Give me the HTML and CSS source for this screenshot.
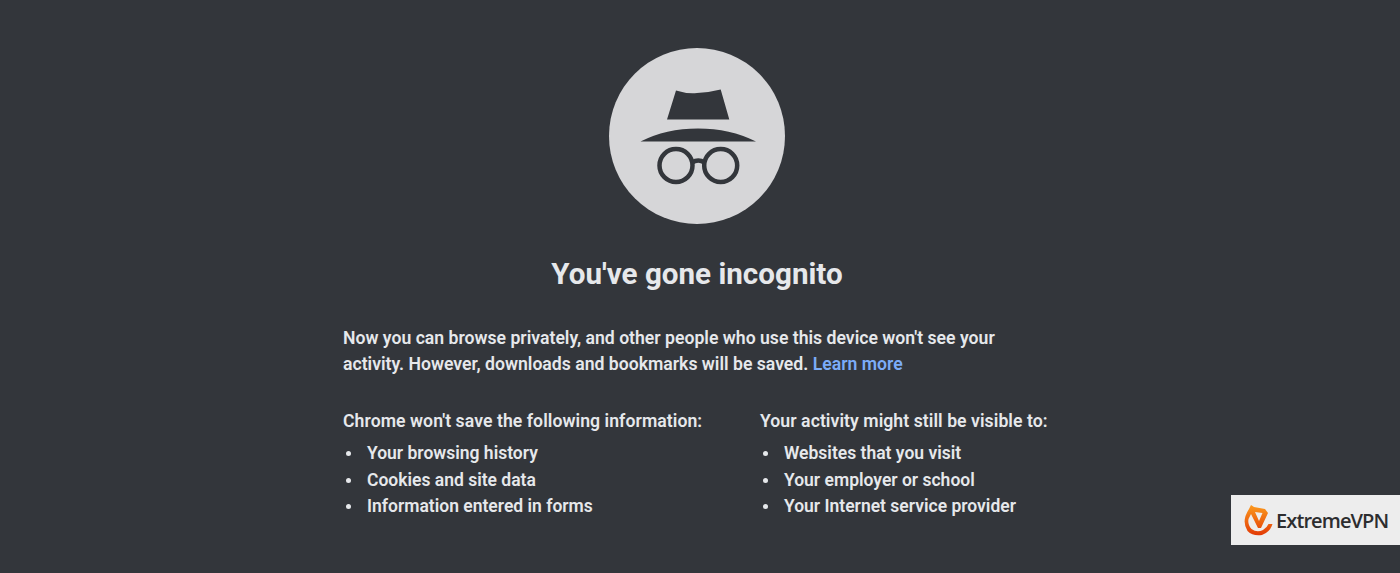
FILE: index.html
```html
<!DOCTYPE html>
<html lang="en">
<head>
    <meta charset="UTF-8">
    <meta name="viewport" content="width=device-width, initial-scale=1.0">
    <title>You've gone incognito</title>
    <link rel="stylesheet" href="styles.css">
</head>
<body>
    <main class="incognito">
        <svg class="incognito-icon" width="176" height="176" viewBox="0 0 176 176" aria-hidden="true">
            <circle cx="88" cy="88" r="88" fill="#d6d6d8"/>
            <path d="M67 42.500 Q78 46 88 45 Q100 44.500 111.700 41.500 L120.300 71.500 H58 Z" fill="#33363b"/>
            <path d="M31.500 93.500 Q57 80.500 89 80.500 Q121 80.500 147 93.500 Z" fill="#33363b"/>
            <g fill="none" stroke="#33363b" stroke-width="4.500">
                <circle cx="67" cy="117.500" r="16.500"/>
                <circle cx="111.700" cy="117.500" r="16.500"/>
                <path d="M83 114.500 Q89.300 110.500 95.500 114.500"/>
            </g>
        </svg>
        <h1 class="incognito-title">You've gone incognito</h1>
        <p class="incognito-intro">Now you can browse privately, and other people who use this device won't see your activity. However, downloads and bookmarks will be saved. <a href="#">Learn more</a></p>
        <div class="incognito-columns">
            <div class="info-column">
                <h2>Chrome won't save the following information:</h2>
                <ul>
                    <li>Your browsing history</li>
                    <li>Cookies and site data</li>
                    <li>Information entered in forms</li>
                </ul>
            </div>
            <div class="info-column">
                <h2>Your activity might still be visible to:</h2>
                <ul>
                    <li>Websites that you visit</li>
                    <li>Your employer or school</li>
                    <li>Your Internet service provider</li>
                </ul>
            </div>
        </div>
    </main>

    <div class="brand-badge">
        <svg class="brand-logo" width="30" height="32" viewBox="0 0 30 32" aria-hidden="true">
            <defs>
                <linearGradient id="logo-fade" x1="0" y1="0" x2="0" y2="1">
                    <stop offset="0" stop-color="#fb9a1e"/>
                    <stop offset="1" stop-color="#e23a06"/>
                </linearGradient>
            </defs>
            <path d="M5 5 L7 1 L10 3 L21 5 L24 9 L17 24 L14 24 L7 10 L4.500 15 Q3.500 21 7.500 25 Q13 29 19 26 Q23 23.500 24.500 20 L28.500 20 Q26 28 18 31 Q9 32.500 3.500 27 Q-1 20 1.500 12 Q3 8 5 5 Z M11 8 L15 17 L18.500 9 Z" fill="url(#logo-fade)" fill-rule="evenodd"/>
        </svg>
        <span class="brand-name">ExtremeVPN</span>
    </div>
</body>
</html>
```

FILE: styles.css
```css
html, body {
    height: 100%;
}

body {
    margin: 0;
    background: #33363b;
    color: #e6e8eb;
    font-family: Roboto, "Liberation Sans", sans-serif;
    overflow: hidden;
}

.incognito {
    width: 708px;
    margin-left: 343px;
    padding-top: 48px;
}

.incognito-icon {
    display: block;
    margin: 0 auto;
}

.incognito-title {
    margin: 30px 0 0;
    font-size: 29.600px;
    line-height: 40px;
    font-weight: 700;
    text-align: center;
}

.incognito-intro {
    margin: 31px 0 0;
    font-size: 17.640px;
    line-height: 26.400px;
    font-weight: 600;
}

.incognito-intro a {
    color: #7cacf8;
    text-decoration: none;
}

.incognito-columns {
    display: flex;
    gap: 57px;
    margin-top: 30px;
}

.info-column:first-child {
    width: 360px;
}

.info-column h2 {
    margin: 0 0 6px;
    font-size: 17.640px;
    line-height: 26.400px;
    font-weight: 600;
    letter-spacing: 0.060px;
    white-space: nowrap;
}

.info-column ul {
    margin: 0;
    padding: 0 0 0 24px;
    list-style: none;
    font-size: 17.500px;
    line-height: 26.400px;
    font-weight: 600;
}

.info-column li::before {
    content: "";
    display: inline-block;
    width: 5px;
    height: 5px;
    margin: 0 16px 2px -21px;
    border-radius: 50%;
    background: currentColor;
    vertical-align: middle;
}

.brand-badge {
    position: absolute;
    right: 0;
    bottom: 28px;
    display: flex;
    align-items: center;
    gap: 2px;
    box-sizing: border-box;
    width: 169px;
    height: 50px;
    padding-left: 13px;
    background: #ededed;
}

.brand-name {
    color: #2d2d2f;
    font-family: "Open Sans", sans-serif;
    font-size: 20px;
    font-weight: 600;
    letter-spacing: -0.900px;
}
```
